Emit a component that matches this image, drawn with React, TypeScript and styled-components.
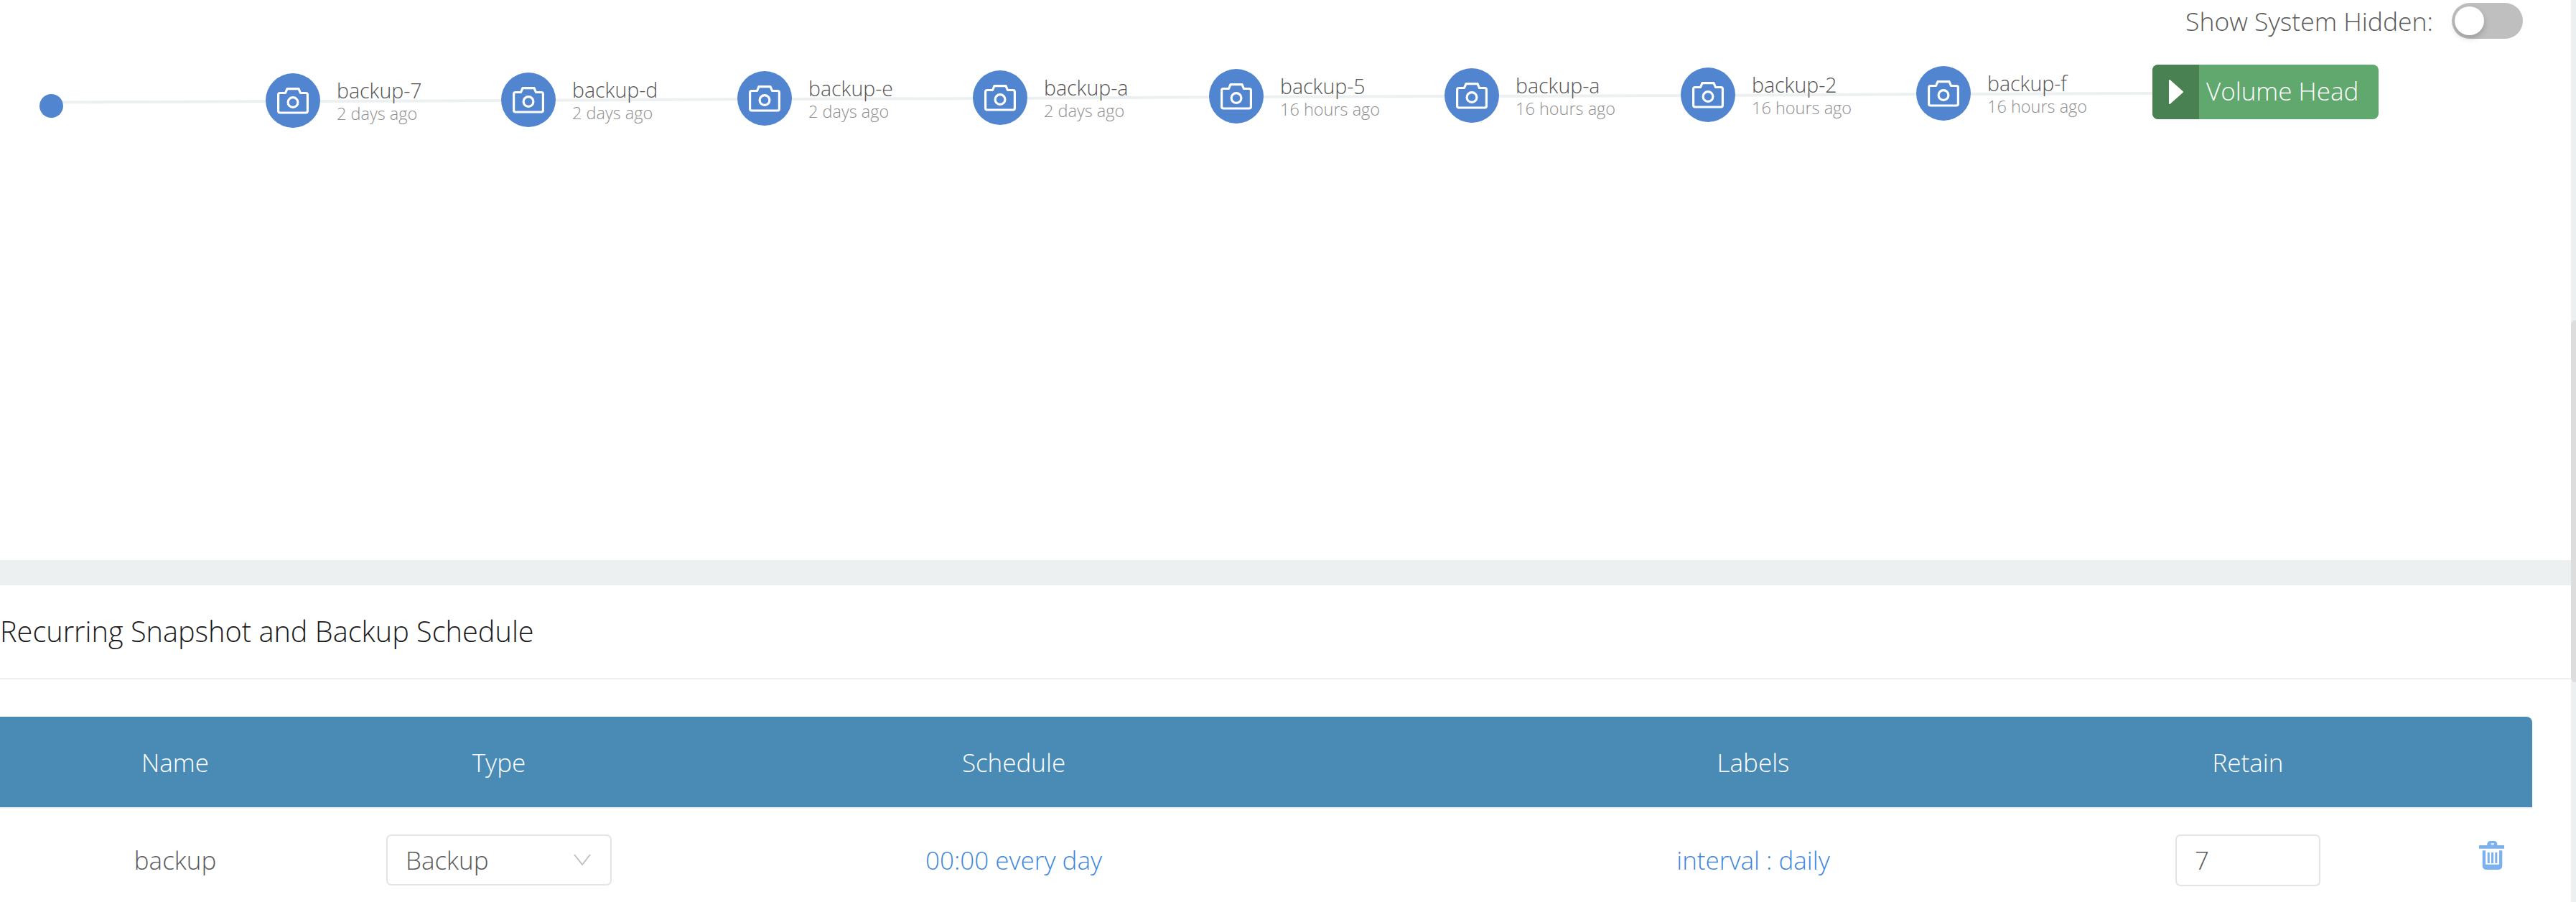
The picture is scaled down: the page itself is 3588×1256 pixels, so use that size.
import React from "react";
import styled, { createGlobalStyle } from "styled-components";

const GlobalStyle = createGlobalStyle`
  html, body {
    margin: 0;
    padding: 0;
    background: #fff;
  }
  body {
    font-family: "Open Sans", "Noto Sans", sans-serif;
    font-weight: 300;
    overflow: hidden;
  }
`;

type Snapshot = { name: string; age: string; x: number; y: number };

const snapshots: Snapshot[] = [
  { name: "backup-7", age: "2 days ago", x: 408, y: 140 },
  { name: "backup-d", age: "2 days ago", x: 736, y: 139 },
  { name: "backup-e", age: "2 days ago", x: 1065, y: 137 },
  { name: "backup-a", age: "2 days ago", x: 1393, y: 136 },
  { name: "backup-5", age: "16 hours ago", x: 1722, y: 134 },
  { name: "backup-a", age: "16 hours ago", x: 2050, y: 133 },
  { name: "backup-2", age: "16 hours ago", x: 2379, y: 132 },
  { name: "backup-f", age: "16 hours ago", x: 2707, y: 130 },
];

const Page = styled.div`
  display: flex;
  width: 3588px;
  height: 1256px;
  overflow: hidden;
`;

const Main = styled.main`
  width: 3581px;
`;

const Gutter = styled.div`
  width: 7px;
  padding-top: 446px;
  background: #ecf0f1;
`;

const ScrollThumb = styled.div`
  height: 504px;
  border-radius: 6px 0 0 6px;
  background: #dddddd;
`;

const GraphPanel = styled.section`
  height: 780px;
  position: relative;
`;

const HiddenToggleRow = styled.div`
  display: flex;
  justify-content: flex-end;
  align-items: center;
  gap: 26px;
  padding: 4px 67px 0 0;
  font-size: 35.5px;
  color: #5a5a5a;
`;

const Toggle = styled.div`
  width: 99px;
  height: 50px;
  border-radius: 25px;
  background: #bfbfbf;
  position: relative;
`;

const ToggleKnob = styled.span`
  position: absolute;
  left: 4px;
  top: 5px;
  width: 41px;
  height: 40px;
  border-radius: 50%;
  background: #fff;
  box-shadow: 0 4px 8px rgba(0, 0, 0, 0.2);
`;

const Edges = styled.svg`
  position: absolute;
  left: 0;
  top: 0;
`;

const StartDot = styled.span`
  position: absolute;
  left: 55px;
  top: 131px;
  width: 33px;
  height: 33px;
  border-radius: 50%;
  background: #5185d0;
`;

const SnapshotNode = styled.div`
  position: absolute;
  display: flex;
  align-items: center;
  gap: 23px;
  transform: translate(-38px, -38px);
`;

const SnapshotCircle = styled.span`
  width: 76px;
  height: 76px;
  border-radius: 50%;
  background: #5185d0;
  display: flex;
  align-items: center;
  justify-content: center;
`;

const SnapshotText = styled.div`
  display: flex;
  flex-direction: column;
`;

const SnapshotName = styled.span`
  font-size: 28.5px;
  line-height: 36px;
  color: #555;
`;

const SnapshotAge = styled.span`
  font-size: 23.5px;
  line-height: 28px;
  color: #8f8f8f;
`;

const VolumeHead = styled.div`
  position: absolute;
  left: 2998px;
  top: 90px;
  width: 315px;
  height: 76px;
  display: flex;
  border-radius: 8px;
  overflow: hidden;
  background: #60a86d;
  color: #fff;
`;

const HeadArrow = styled.span`
  width: 65px;
  background: #4a8153;
  display: flex;
  align-items: center;
  justify-content: center;
`;

const HeadLabel = styled.span`
  flex: 1;
  padding-left: 10px;
  font-size: 35px;
  line-height: 74px;
  white-space: nowrap;
`;

const Band = styled.div`
  height: 35px;
  background: #ecf0f1;
`;

const SectionTitle = styled.h2`
  margin: 0 0 52px;
  height: 129px;
  line-height: 129px;
  font-size: 39.7px;
  font-weight: 300;
  color: #1c1c1c;
  border-bottom: 2px solid #f0f0f0;
`;

const columns = "488px 414px 1020px 1040px 338px 227px";

const TableHead = styled.div`
  width: 3527px;
  height: 126px;
  display: grid;
  grid-template-columns: ${columns};
  align-items: center;
  background: #4a8bb5;
  border-top-right-radius: 8px;
  border-bottom: 2px solid #f0f0f0;
  color: #fff;
  font-size: 35px;
  text-align: center;
`;

const TableRow = styled.div`
  width: 3527px;
  height: 143px;
  display: grid;
  grid-template-columns: ${columns};
  align-items: center;
  justify-items: center;
  font-size: 35px;
  color: #5a5a5a;
`;

const LinkText = styled.a`
  color: #3f87de;
`;

const SelectBox = styled.div`
  width: 314px;
  height: 71px;
  box-sizing: border-box;
  border: 2px solid #e4e4e4;
  border-radius: 7px;
  padding: 0 27px 0 25px;
  display: flex;
  align-items: center;
  justify-content: space-between;
`;

const RetainInput = styled.div`
  width: 202px;
  height: 72px;
  box-sizing: border-box;
  border: 2px solid #e4e4e4;
  border-radius: 7px;
  padding-left: 25px;
  display: flex;
  align-items: center;
`;

const TrashCell = styled.div`
  justify-self: end;
  margin: -13px 39px 0 0;
  display: flex;
`;

const Camera = () => (
  <svg width="44" height="37" viewBox="0 0 44 37" fill="none" stroke="#fff" strokeWidth="3.2" strokeLinejoin="round">
    <path d="M4 7.500h7.500l2.500-5.900h16l2.500 5.900H40a2.400 2.400 0 0 1 2.400 2.400v22.700a2.400 2.400 0 0 1-2.400 2.400H4a2.400 2.400 0 0 1-2.400-2.400V9.900A2.400 2.400 0 0 1 4 7.500z" />
    <circle cx="22" cy="20.500" r="6.900" />
  </svg>
);

const Trash = () => (
  <svg width="35" height="40" viewBox="0 0 35 40" fill="#7ab1ee">
    <path fillRule="evenodd" d="M11.300 6V4.500A4.500 4.500 0 0 1 15.800 0h5a4.500 4.500 0 0 1 4.500 4.500V6H35v4.700H0V6h11.300zm5.400-2.700v2h4v-2h-4z" />
    <path d="M4.700 13.300H9v19.400h19V13.300h4.300V35a5 5 0 0 1-5 5H9.700a5 5 0 0 1-5-5V13.300z" />
    <path d="M11.700 16h3v15h-3zM17 16h3v15h-3zM22.300 16h3v15h-3z" />
  </svg>
);

const Chevron = () => (
  <svg width="24" height="17" viewBox="0 0 24 17" fill="none" stroke="#c0c0c0" strokeWidth="2">
    <path d="M1 1l11 14L23 1" />
  </svg>
);

const App = () => {
  const edgePoints = [`71,142.5`, ...snapshots.map((s) => `${s.x},${s.y + 1}`), `3000,130`].join(" ");

  return (
    <>
      <GlobalStyle />
      <Page>
        <Main>
          <GraphPanel>
            <HiddenToggleRow>
              Show System Hidden:
              <Toggle>
                <ToggleKnob />
              </Toggle>
            </HiddenToggleRow>
            <Edges width="3581" height="300">
              <polyline points={edgePoints} fill="none" stroke="#ecf0f1" strokeWidth="4" />
            </Edges>
            <StartDot />
            {snapshots.map((s, i) => (
              <SnapshotNode key={i} style={{ left: s.x, top: s.y }}>
                <SnapshotCircle>
                  <Camera />
                </SnapshotCircle>
                <SnapshotText>
                  <SnapshotName>{s.name}</SnapshotName>
                  <SnapshotAge>{s.age}</SnapshotAge>
                </SnapshotText>
              </SnapshotNode>
            ))}
            <VolumeHead>
              <HeadArrow>
                <svg width="22" height="36" viewBox="0 0 22 36" fill="#fff" stroke="#fff" strokeWidth="2" strokeLinejoin="round">
                  <path d="M2 2l18 16L2 34z" />
                </svg>
              </HeadArrow>
              <HeadLabel>Volume Head</HeadLabel>
            </VolumeHead>
          </GraphPanel>
          <Band />
          <section>
            <SectionTitle>Recurring Snapshot and Backup Schedule</SectionTitle>
            <TableHead>
              <span>Name</span>
              <span>Type</span>
              <span>Schedule</span>
              <span>Labels</span>
              <span>Retain</span>
              <span />
            </TableHead>
            <TableRow>
              <span>backup</span>
              <SelectBox>
                Backup
                <Chevron />
              </SelectBox>
              <LinkText>00:00 every day</LinkText>
              <LinkText>interval : daily</LinkText>
              <RetainInput>7</RetainInput>
              <TrashCell>
                <Trash />
              </TrashCell>
            </TableRow>
          </section>
        </Main>
        <Gutter>
          <ScrollThumb />
        </Gutter>
      </Page>
    </>
  );
};

export default App;
